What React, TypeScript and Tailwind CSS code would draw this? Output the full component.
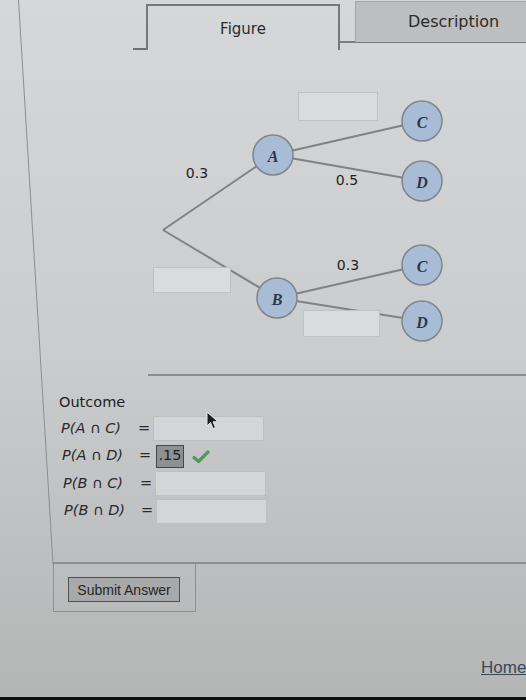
import React from "react";

const NODE_FILL = "#a9bcd5";
const NODE_STROKE = "#7e858d";
const EDGE = "#7f8387";

const nodes = [
  { id: "A", x: 273, y: 155 },
  { id: "B", x: 277, y: 298 },
  { id: "C", x: 422, y: 121 },
  { id: "D", x: 422, y: 181 },
  { id: "C", x: 422, y: 265 },
  { id: "D", x: 422, y: 321 },
];

const edges: [number, number, number, number][] = [
  [163, 230, 273, 155],
  [163, 230, 277, 298],
  [273, 155, 422, 121],
  [273, 155, 422, 181],
  [277, 298, 422, 265],
  [277, 298, 422, 321],
];

const probs = [
  { t: "0.3", x: 197, y: 173 },
  { t: "0.5", x: 347, y: 180 },
  { t: "0.3", x: 348, y: 265 },
];

function Blank({ className }: { className: string }) {
  return <div className={`absolute bg-[#d9dbdc] border border-[#bfc1c2] ${className}`} />;
}

function TreeFigure() {
  return (
    <div className="relative h-[324px] w-full">
      <svg className="absolute inset-0" width="526" height="324" viewBox="0 50 526 324">
        {edges.map(([x1, y1, x2, y2], i) => (
          <line key={i} x1={x1} y1={y1} x2={x2} y2={y2} stroke={EDGE} strokeWidth="2" />
        ))}
        {nodes.map((n, i) => (
          <g key={i}>
            <circle cx={n.x} cy={n.y} r="20" fill={NODE_FILL} stroke={NODE_STROKE} strokeWidth="1.5" />
            <text
              x={n.x}
              y={n.y + 1}
              textAnchor="middle"
              dominantBaseline="central"
              fontFamily="'Liberation Serif', serif"
              fontStyle="italic"
              fontWeight="bold"
              fontSize="16"
              fill="#2d374a"
            >
              {n.id}
            </text>
          </g>
        ))}
        {probs.map((p, i) => (
          <text
            key={i}
            x={p.x}
            y={p.y}
            textAnchor="middle"
            dominantBaseline="central"
            fontFamily="'DejaVu Sans', sans-serif"
            fontSize="14"
            fill="#222"
          >
            {p.t}
          </text>
        ))}
      </svg>
      {/* answer blanks on the tree */}
      <Blank className="left-[298px] top-[42px] w-[80px] h-[29px]" />
      <Blank className="left-[153px] top-[217px] w-[78px] h-[26px]" />
      <Blank className="left-[303px] top-[260px] w-[77px] h-[27px]" />
    </div>
  );
}

function OutcomeRow({ label, children }: { label: string; children?: React.ReactNode }) {
  return (
    <div className="flex items-center h-[26px]">
      <span className="w-[77px] italic text-[14.5px] text-[#2a2a2a]">{label}</span>
      <span className="w-[15px] text-[14.5px] text-[#2a2a2a]">=</span>
      {children ?? <div className="w-[111px] h-[25px] bg-[#d3d5d6] border border-[#bdbfc0]" />}
    </div>
  );
}

export default function App() {
  return (
    <div
      className="relative w-[526px] h-[700px] overflow-hidden flex flex-col bg-linear-to-b from-[#d5d7d8] via-[#caccce] to-[#b4b5b5]"
      style={{ fontFamily: "'DejaVu Sans', sans-serif" }}
    >
      {/* left edge of the panel, slanted by the camera angle */}
      <div className="absolute left-[18px] top-0 h-[564px] border-l border-[#8c8e90] origin-top-left skew-x-[3.5deg]" />

      <div className="h-[562px] flex flex-col">
        {/* tabs */}
        <div className="flex items-start">
          <div className="ml-[133px] w-[13px] h-[50px] border-b-2 border-[#6e7174]" />
          <div className="mt-[4px] w-[194px] h-[46px] border-t-2 border-l-2 border-r-2 border-[#75787b] flex justify-center pt-[12px]">
            <span className="text-[15px] text-[#2b2b2b]">Figure</span>
          </div>
          <div className="flex-1 h-[43px] border-b-2 border-[#7b7e81] pl-[15px]">
            <div className="h-full mt-[1px] bg-[#bdbebf] border-l border-t border-[#a4a6a8] pl-[52px] pt-[8px] whitespace-nowrap">
              <span className="text-[16px] text-[#2b2b2b]">Description</span>
            </div>
          </div>
        </div>

        <TreeFigure />
        <div className="ml-[148px] border-t-2 border-[#8b8d8f]" />

        {/* outcome table */}
        <div className="pl-[59px] pt-[17px] flex flex-col gap-[1.5px]">
          <div className="text-[14.5px] leading-[18px] mb-[3px] text-[#222]">Outcome</div>
          <div className="pl-[2px]">
            <OutcomeRow label="P(A ∩ C)" />
          </div>
          <div className="pl-[3px]">
            <OutcomeRow label="P(A ∩ D)">
              <div className="flex items-center gap-[8px]">
                <div className="ml-[2px] w-[28px] h-[23px] bg-[#8f9091] border border-[#454648] flex items-center justify-center text-[14.5px] text-[#1f1f1f]">
                  .15
                </div>
                <svg width="18" height="15" viewBox="0 0 18 15">
                  <path d="M2 8.5 L6.5 12.5 L16 3" fill="none" stroke="#4f9a58" strokeWidth="3.2" strokeLinecap="round" strokeLinejoin="round" />
                </svg>
              </div>
            </OutcomeRow>
          </div>
          <div className="pl-[4px]">
            <OutcomeRow label="P(B ∩ C)" />
          </div>
          <div className="pl-[5px]">
            <OutcomeRow label="P(B ∩ D)" />
          </div>
        </div>
      </div>

      {/* panel bottom + submit area */}
      <div className="ml-[53px] border-t-2 border-[#8b8d8f]" />
      <div className="ml-[53px] w-[143px] h-[48px] border-l border-r border-b border-[#8e9092] pl-[14px] pt-[13px]">
        <button
          className="w-[112px] h-[25px] bg-[#a8a9aa] border border-[#505153] text-[14px] text-[#262626] leading-none"
          style={{ fontFamily: "'Liberation Sans', Arial, sans-serif" }}
        >
          Submit Answer
        </button>
      </div>

      <div className="mt-[43px] pl-[481px] whitespace-nowrap">
        <span
          className="text-[17px] text-[#3a4858] underline"
          style={{ fontFamily: "'Liberation Sans', Arial, sans-serif" }}
        >
          Home
        </span>
      </div>

      <div className="flex-1" />
      <div className="h-[3px] bg-[#111]" />

      {/* mouse pointer */}
      <svg className="absolute left-[206px] top-[411px]" width="14" height="20" viewBox="0 0 14 20">
        <path d="M1 1 L1 15 L4.5 11.5 L7 17.5 L9.5 16.5 L7 10.8 L12 10.8 Z" fill="#1c1c1c" stroke="#e8e8e8" strokeWidth="1" />
      </svg>
    </div>
  );
}
